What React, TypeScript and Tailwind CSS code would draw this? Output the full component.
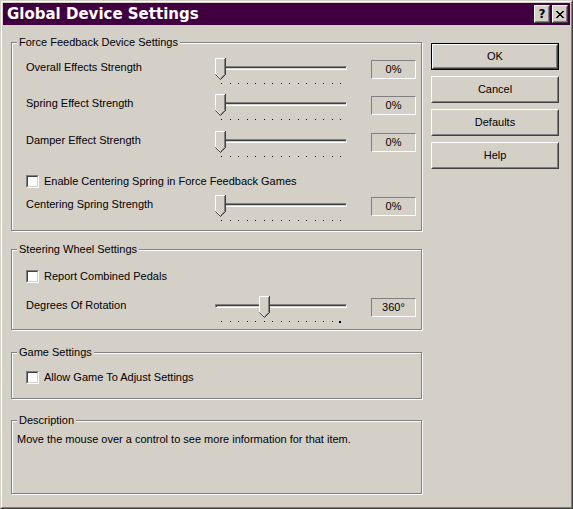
import React from "react";

const FACE = "bg-[#d4d0c8]";

function Group({
  title,
  className,
  children,
}: {
  title: string;
  className?: string;
  children?: React.ReactNode;
}) {
  return (
    <div
      className={[
        "relative border border-[#808080] shadow-[inset_1px_1px_0_#fff,1px_1px_0_#fff]",
        className || "",
      ].join(" ")}
    >
      <span className={`absolute -top-[7px] left-[5px] px-[2px] leading-[13px] ${FACE}`}>
        {title}
      </span>
      {children}
    </div>
  );
}

function Checkbox({ label }: { label: string }) {
  return (
    <div className="flex h-[13px] items-center">
      <span className="block h-[13px] w-[13px] border border-t-[#808080] border-l-[#808080] border-b-white border-r-white">
        <span className="block h-[11px] w-[11px] border border-t-[#404040] border-l-[#404040] border-b-[#d4d0c8] border-r-[#d4d0c8] bg-white" />
      </span>
      <span className="ml-[5px] leading-[13px]">{label}</span>
    </div>
  );
}

function Thumb({ left }: { left: number }) {
  return (
    <svg
      className="absolute top-0"
      style={{ left }}
      width="11"
      height="23"
      viewBox="0 0 11 23"
      shapeRendering="crispEdges"
    >
      <polygon points="0,0 11,0 11,16 5.5,22 0,16" fill="#d4d0c8" />
      <path d="M0.5 16 V0.5 H10" stroke="#fff" fill="none" />
      <path d="M10.5 0 V16.5" stroke="#404040" fill="none" />
      <path d="M9.5 1 V16" stroke="#808080" fill="none" />
      <path d="M0.5 16.5 L5.5 21.5 L10.5 16.5" stroke="#404040" fill="none" shapeRendering="auto" />
      <path d="M1.5 16.5 L5.5 20.5" stroke="#fff" fill="none" shapeRendering="auto" />
      <path d="M9.5 16.5 L5.5 20.5" stroke="#808080" fill="none" shapeRendering="auto" />
    </svg>
  );
}

function Slider({ thumb, bigLast }: { thumb: number; bigLast?: boolean }) {
  const ticks = Array.from({ length: 15 }, (_, i) => Math.round(6 + i * 8.5));
  return (
    <div className="relative h-[26px] w-[132px] pt-[8px]">
      <div className="h-[4px] border border-t-[#808080] border-l-[#808080] border-b-white border-r-white">
        <div className="h-[2px] border-t border-l border-[#404040]" />
      </div>
      <svg className="mt-[13px] block" width="132" height="2" shapeRendering="crispEdges">
        {ticks.map((x, i) =>
          bigLast && i === ticks.length - 1 ? (
            <rect key={i} x={x - 1} y={0} width={2} height={2} fill="#000" />
          ) : (
            <rect key={i} x={x} y={0} width={1} height={1} fill="#000" />
          )
        )}
      </svg>
      <Thumb left={thumb} />
    </div>
  );
}

function SliderRow({
  label,
  value,
  thumb = 0,
  bigLast,
  className,
}: {
  label: string;
  value: string;
  thumb?: number;
  bigLast?: boolean;
  className?: string;
}) {
  return (
    <div className={["flex h-[26px] items-start", className || ""].join(" ")}>
      <div className="w-[189px] pt-[3px] leading-[13px]">{label}</div>
      <Slider thumb={thumb} bigLast={bigLast} />
      <div className="ml-[24px] mt-[2px] flex h-[19px] w-[45px] items-center justify-center border border-t-[#808080] border-l-[#808080] border-b-white border-r-white leading-[13px]">
        {value}
      </div>
    </div>
  );
}

function Button({ label, isDefault }: { label: string; isDefault?: boolean }) {
  const inner = (
    <div className="h-full w-full border border-t-white border-l-white border-b-[#404040] border-r-[#404040]">
      <div className="flex h-full w-full items-center justify-center border border-t-[#d4d0c8] border-l-[#d4d0c8] border-b-[#808080] border-r-[#808080] leading-[13px]">
        {label}
      </div>
    </div>
  );
  if (isDefault) {
    return <div className="h-[27px] w-[128px] border border-black">{inner}</div>;
  }
  return <div className="h-[27px] w-[128px]">{inner}</div>;
}

function CaptionButton({ children }: { children: React.ReactNode }) {
  return (
    <div className={`h-[18px] w-[16px] border border-t-white border-l-white border-b-[#404040] border-r-[#404040] ${FACE}`}>
      <div className="flex h-full w-full items-center justify-center border border-t-[#d4d0c8] border-l-[#d4d0c8] border-b-[#808080] border-r-[#808080]">
        {children}
      </div>
    </div>
  );
}

export default function App() {
  return (
    <div
      className={`h-[509px] w-[573px] border border-t-[#d4d0c8] border-l-[#d4d0c8] border-b-[#404040] border-r-[#404040] ${FACE} font-['Liberation_Sans',Arial,sans-serif] text-[11px] text-black`}
    >
      <div className="h-full w-full border border-t-white border-l-white border-b-[#808080] border-r-[#808080] p-px">
        {/* caption */}
        <div className="flex h-[22px] items-center bg-[#400040] pl-[4px]">
          <span className="font-['DejaVu_Sans',sans-serif] text-[15px] font-bold leading-[18px] text-white">
            Global Device Settings
          </span>
          <div className="ml-auto mr-[2px] flex gap-[2px]">
            <CaptionButton>
              <span className="font-['DejaVu_Sans',sans-serif] text-[12px] font-bold leading-[12px]">?</span>
            </CaptionButton>
            <CaptionButton>
              <svg width="8" height="7" viewBox="0 0 8 7" shapeRendering="crispEdges">
                <path
                  d="M0 0h2v1h-2zM6 0h2v1h-2zM1 1h2v1h-2zM5 1h2v1h-2zM2 2h4v1h-4zM3 3h2v1h-2zM2 4h4v1h-4zM1 5h2v1h-2zM5 5h2v1h-2zM0 6h2v1h-2zM6 6h2v1h-2z"
                  fill="#000"
                />
              </svg>
            </CaptionButton>
          </div>
        </div>

        {/* body */}
        <div className="flex pl-[8px] pt-[17px]">
          <div className="w-[411px]">
            <Group title="Force Feedback Device Settings" className="h-[189px] pl-[14px] pt-[15px]">
              <SliderRow label="Overall Effects Strength" value="0%" />
              <SliderRow label="Spring Effect Strength" value="0%" className="mt-[10px]" />
              <SliderRow label="Damper Effect Strength" value="0%" className="mt-[11px]" />
              <div className="mt-[18px]">
                <Checkbox label="Enable Centering Spring in Force Feedback Games" />
              </div>
              <SliderRow label="Centering Spring Strength" value="0%" className="mt-[7px]" />
            </Group>

            <Group title="Steering Wheel Settings" className="mt-[18px] h-[81px] pl-[14px] pt-[20px]">
              <Checkbox label="Report Combined Pedals" />
              <SliderRow label="Degrees Of Rotation" value="360°" thumb={44} bigLast className="mt-[13px]" />
            </Group>

            <Group title="Game Settings" className="mt-[22px] h-[47px] pl-[14px] pt-[18px]">
              <Checkbox label="Allow Game To Adjust Settings" />
            </Group>

            <Group title="Description" className="mt-[21px] h-[74px] pl-[5px] pt-[12px]">
              <div className="leading-[13px]">
                Move the mouse over a control to see more information for that item.
              </div>
            </Group>
          </div>

          <div className="ml-[9px] mt-[1px] flex flex-col gap-[6px]">
            <Button label="OK" isDefault />
            <Button label="Cancel" />
            <Button label="Defaults" />
            <Button label="Help" />
          </div>
        </div>
      </div>
    </div>
  );
}
